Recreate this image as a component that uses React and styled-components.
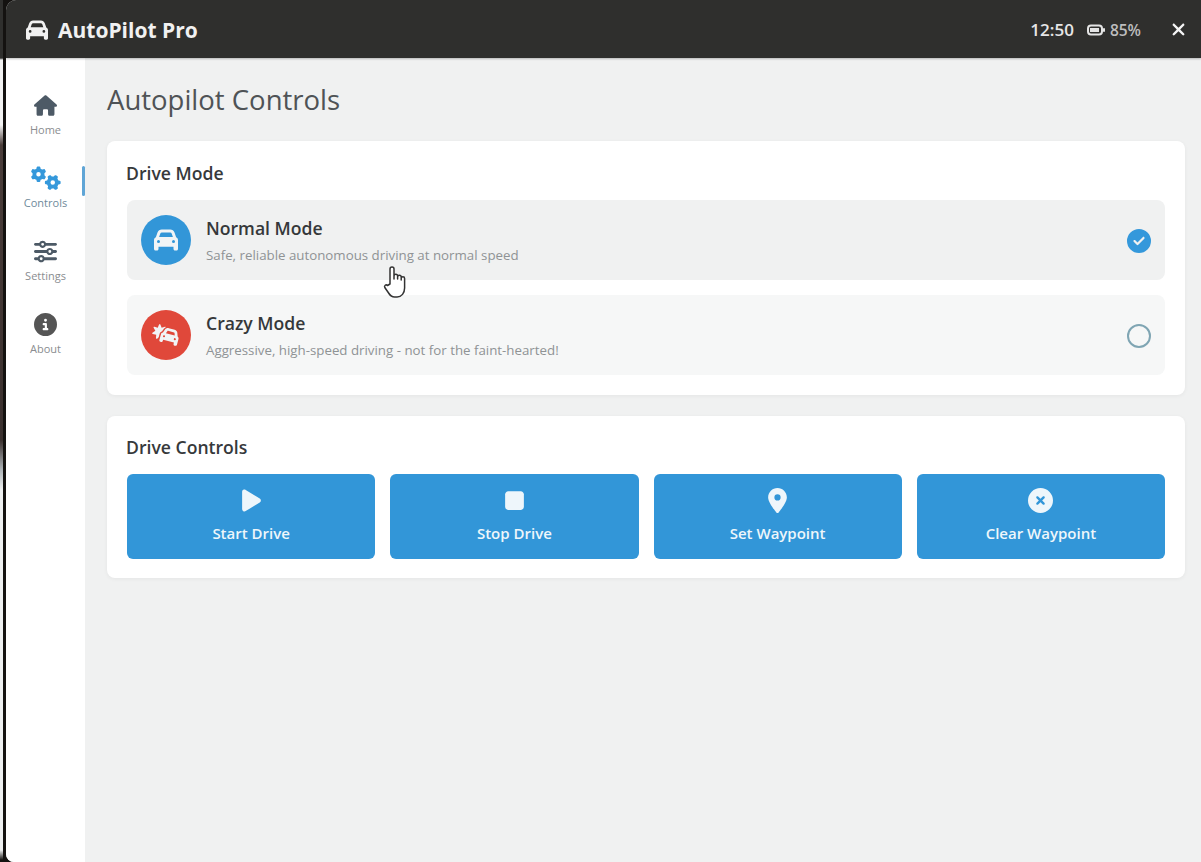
import React from 'react';
import styled, { createGlobalStyle } from 'styled-components';
import { FaCar, FaHouse, FaGears, FaSliders, FaCircleInfo, FaPlay, FaStop, FaLocationDot, FaCircleXmark, FaCircleCheck, FaCarBurst, FaXmark } from 'react-icons/fa6';

const Global = createGlobalStyle`
  html, body { margin: 0; padding: 0; height: 100%; background: #141210; }
  body { font-family: "Open Sans", "Liberation Sans", sans-serif; overflow: hidden; }
  #root { height: 100%; }
  * { box-sizing: border-box; }
`;

const Frame = styled.div`
  width: 1201px; height: 862px; padding-left: 6px; position: relative; overflow: hidden;
  background:
    linear-gradient(to right, transparent 3px, #141210 3px),
    linear-gradient(to bottom, #2f2f2d 58px, #f2f2f2 60px, #f2f2f2 125px, #4a3d3a 145px, #3a302e 440px, #aeb4b8 470px, #eef0f0 490px, #eef0f0 850px, #141210 860px);
`;
const Win = styled.div`
  width: 100%; height: 100%; display: flex; flex-direction: column; background: #f0f1f1;
  border-top-left-radius: 10px; border-bottom-left-radius: 8px; overflow: hidden;
`;
const TopBar = styled.header`
  height: 58px; flex: none; background: #2f2f2d; color: #fff; display: flex; align-items: center;
  padding: 1px 13px 0 20px; box-shadow: 0 1px 2px rgba(0,0,0,.25); z-index: 1;
`;
const Brand = styled.div`
  display: flex; align-items: center; gap: 10px; font-size: 21px; font-weight: 700; color: #f1f1f1; flex: 1;
  svg { font-size: 22px; }
`;
const Status = styled.div` display: flex; align-items: center; color: #e6e6e6; `;
const Time = styled.span` font-size: 17px; font-weight: 600; margin-right: 13px; `;
const Percent = styled.span` font-size: 15.5px; font-weight: 600; color: #bdbdbd; margin-left: 5px; margin-right: 28px; `;
const Close = styled.span` display: flex; color: #f5f5f5; font-size: 19px; `;
const Body = styled.div` flex: 1; display: flex; min-height: 0; `;
const Side = styled.nav`
  width: 79px; flex: none; background: #fff; display: flex; flex-direction: column; align-items: stretch; padding-top: 29px; gap: 12px;
`;
const NavItem = styled.div`
  position: relative; height: 61px; display: flex; flex-direction: column; align-items: center; gap: 4px; padding-top: 5px;
  color: ${p => p.$active ? '#3498db' : '#4d5a66'};
  svg { height: 23px; width: auto; margin: 1.5px 0; display: block; }
  span { font-size: 11px; line-height: 15px; color: ${p => p.$active ? '#6f8a9b' : '#8a8d90'}; }
  &::after {
    content: ${p => p.$active ? '""' : 'none'}; position: absolute; right: 0; top: 6px; width: 3px; height: 30px; background: #5fa5d6; border-radius: 2px;
  }
`;
const InfoIcon = styled(FaCircleInfo)` color: #555; `;
const GearsIcon = styled(FaGears)`
  && { height: 30px; margin: -2px 0; }
`;
const Main = styled.main`
  flex: 1; padding: 24px 16px 0 22px; display: flex; flex-direction: column;
`;
const Title = styled.h1`
  margin: 0 0 23px; font-size: 27.5px; line-height: 36px; font-weight: 500; color: #4f5356;
`;
const Card = styled.section`
  background: #fff; border-radius: 8px; padding: ${p => p.$tight ? '19px 20px' : '20px'}; margin-bottom: 21px; box-shadow: 0 1px 4px rgba(0,0,0,.05);
`;
const CardTitle = styled.h2`
  margin: 0 0 15px -1px; font-size: 17.6px; line-height: 24px; font-weight: 600; color: #36393b;
`;
const Modes = styled.div` display: flex; flex-direction: column; gap: 15px; `;
const Mode = styled.div`
  height: 80px; border-radius: 8px; background: ${p => p.$active ? '#f0f1f1' : '#f6f7f7'};
  display: flex; align-items: center; padding: 0 14px; gap: 15px;
`;
const Circle = styled.div`
  width: 50px; height: 50px; border-radius: 50%; background: ${p => p.$bg}; color: #f1f4f6; flex: none;
  display: flex; align-items: center; justify-content: center; font-size: ${p => p.$size}px;
`;
const ModeText = styled.div` flex: 1; min-width: 0; `;
const ModeName = styled.div` font-size: 17.6px; line-height: 24px; font-weight: 600; color: #35383a; margin-bottom: 6px; `;
const ModeDesc = styled.div` font-size: 13.3px; line-height: 18px; color: #8f9395; `;
const Check = styled.div` display: flex; color: #3498db; font-size: 24px; margin-top: 2px; `;
const Radio = styled.div` width: 24px; height: 24px; border-radius: 50%; border: 2px solid #7fa5b3; margin-top: 1px; `;
const Buttons = styled.div` display: grid; grid-template-columns: repeat(4, 1fr); gap: 15px; `;
const Btn = styled.button`
  height: 85px; border: 0; border-radius: 6px; background: #3296d8; color: #eef6fb; font-family: inherit;
  display: flex; flex-direction: column; align-items: center; padding: 14px 0 0; gap: 10px;
  font-size: 15px; font-weight: 600; line-height: 21px;
  svg { font-size: 25px; height: 25px; display: block; }
`;
const Cursor = styled.div`
  position: absolute; left: 383px; top: 265px; width: 24px; height: 34px; pointer-events: none;
`;

const Battery = () => (
  <svg width="18" height="12" viewBox="0 0 18 12" fill="none">
    <rect x="1" y="1.5" width="14" height="9" rx="3" stroke="#e4e4e4" strokeWidth="2" />
    <rect x="3" y="4" width="9" height="4" fill="#e4e4e4" />
    <rect x="16" y="4" width="2" height="4" rx="1" fill="#e4e4e4" />
  </svg>
);

const Hand = () => (
  <svg width="24" height="34" viewBox="0 0 24 34" fill="#fff" stroke="#333" strokeWidth="1.5" strokeLinejoin="round" strokeLinecap="round">
    <path d="M7 19V4a2 2 0 0 1 4 0v10l0-3a1.8 1.8 0 0 1 3.6 0v3l0-2a1.8 1.8 0 0 1 3.6 0v3l0-1.500a1.700 1.700 0 0 1 3.400 0V23c0 5-3 9-7.500 9h-2.500c-3 0-4.500-1.500-6-4L1.800 22.500c-1-1.800 1.200-3.500 2.700-2z" />
  </svg>
);

const modes = [
  { name: 'Normal Mode', desc: 'Safe, reliable autonomous driving at normal speed', icon: <FaCar />, bg: '#3296d8', size: 24, active: true },
  { name: 'Crazy Mode', desc: 'Aggressive, high-speed driving - not for the faint-hearted!', icon: <FaCarBurst />, bg: '#e0483a', size: 28 },
];
const nav = [
  { label: 'Home', icon: <FaHouse /> },
  { label: 'Controls', icon: <GearsIcon />, active: true },
  { label: 'Settings', icon: <FaSliders /> },
  { label: 'About', icon: <InfoIcon /> },
];
const actions = [
  { label: 'Start Drive', icon: <FaPlay /> },
  { label: 'Stop Drive', icon: <FaStop /> },
  { label: 'Set Waypoint', icon: <FaLocationDot /> },
  { label: 'Clear Waypoint', icon: <FaCircleXmark /> },
];

export default function App() {
  return (
    <Frame>
      <Global />
      <Win>
        <TopBar>
          <Brand><FaCar />AutoPilot Pro</Brand>
          <Status>
            <Time>12:50</Time>
            <Battery />
            <Percent>85%</Percent>
            <Close><FaXmark /></Close>
          </Status>
        </TopBar>
        <Body>
          <Side>
            {nav.map(n => <NavItem key={n.label} $active={n.active}>{n.icon}<span>{n.label}</span></NavItem>)}
          </Side>
          <Main>
            <Title>Autopilot Controls</Title>
            <Card>
              <CardTitle>Drive Mode</CardTitle>
              <Modes>
                {modes.map(m => (
                  <Mode key={m.name} $active={m.active}>
                    <Circle $bg={m.bg} $size={m.size}>{m.icon}</Circle>
                    <ModeText>
                      <ModeName>{m.name}</ModeName>
                      <ModeDesc>{m.desc}</ModeDesc>
                    </ModeText>
                    {m.active ? <Check><FaCircleCheck /></Check> : <Radio />}
                  </Mode>
                ))}
              </Modes>
            </Card>
            <Card $tight>
              <CardTitle>Drive Controls</CardTitle>
              <Buttons>
                {actions.map(a => <Btn key={a.label}>{a.icon}{a.label}</Btn>)}
              </Buttons>
            </Card>
          </Main>
        </Body>
      </Win>
      <Cursor><Hand /></Cursor>
    </Frame>
  );
}
